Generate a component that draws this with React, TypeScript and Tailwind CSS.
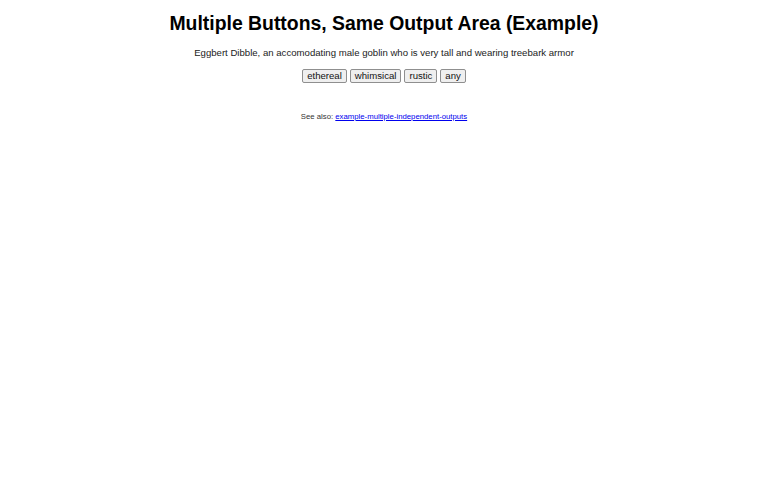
const styles = ['ethereal', 'whimsical', 'rustic', 'any'];

export default function App() {
  return (
    <div className="min-h-screen bg-white text-black text-center font-['Liberation_Sans',Arial,sans-serif]">
      <h1 className="pt-[11px] text-[19.4px] font-bold leading-[24px]">
        Multiple Buttons, Same Output Area (Example)
      </h1>
      <p className="mt-[12px] text-[9.6px] leading-[12px] text-[#222]">
        Eggbert Dibble, an accomodating male goblin who is very tall and wearing treebark armor
      </p>
      <div className="mt-[10px] flex justify-center gap-[3px]">
        {styles.map((s) => (
          <button
            key={s}
            className="h-[14px] px-[4px] text-[9.6px] leading-[12px] bg-[#efefef] border border-[#8f8f8f] rounded-[2px] text-[#111]"
          >
            {s}
          </button>
        ))}
      </div>
      <p className="mt-[29px] text-[7.75px] leading-[10px] text-[#333]">
        See also:{' '}
        <a href="#" className="text-[#0000ee] underline">
          example-multiple-independent-outputs
        </a>
      </p>
    </div>
  );
}
